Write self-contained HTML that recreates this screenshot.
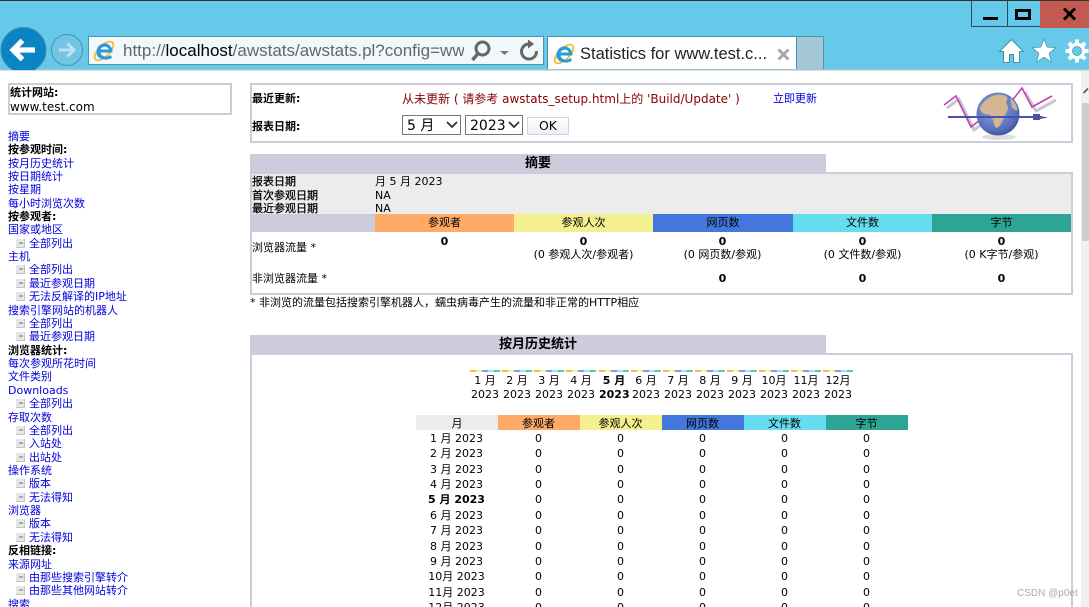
<!DOCTYPE html>
<html lang="zh">
<head>
<meta charset="utf-8">
<title>Statistics for www.test.com</title>
<style>
html,body{margin:0;padding:0;background:#fff;width:1089px;height:607px;overflow:hidden}
body{position:relative;font-family:"DejaVu Sans","WenQuanYi Zen Hei","Noto Sans CJK SC",sans-serif;font-size:11px;color:#000}
div,a,svg,select{position:absolute}
.t{white-space:nowrap;line-height:14px;height:14px;margin-top:1px}
a{color:#0000dd;text-decoration:none}
.b{font-weight:bold}
.ic{width:9px;height:9px;left:16px;background:#e6e6e6;border-right:1px solid #c4c4c4;border-bottom:1px solid #c4c4c4;box-sizing:border-box}
.ic:after{content:"";position:absolute;left:3px;top:3px;width:4px;height:2px;background:#aaa}
.s{left:8px;margin-top:2px}.u{left:29px;margin-top:2px}
.c{text-align:center}
.m{width:82px;padding-right:1px;box-sizing:border-box;text-align:center;white-space:nowrap;line-height:14px;height:14px;margin-top:1px}
.h{text-align:center;line-height:15px;height:15px;top:415px;width:82px;padding:1px 1px 0 0;box-sizing:border-box}
.mini{width:30px;text-align:center;white-space:nowrap;line-height:14px;height:28px;top:374px}
.bar{top:370px;width:30px;height:2px;opacity:.7;background:linear-gradient(90deg,#f90 0 20%,#ee6 20% 40%,#47d 40% 60%,#6de 60% 80%,#2a9 80% 100%)}
.col{width:139px;text-align:center;white-space:nowrap;line-height:14px;height:14px}
.sb{-webkit-text-stroke:.25px #000}
select{appearance:none;-webkit-appearance:none;border:1px solid #767676;background:#fff;border-radius:0;font:14px "DejaVu Sans","WenQuanYi Zen Hei",sans-serif;padding:1px 0 0 4px;margin:0;color:#000;box-sizing:border-box}
</style>
</head>
<body>
<!-- browser chrome -->
<div style="left:0;top:0;width:1089px;height:69px;background:#66c9ea"></div>
<div style="left:0;top:0;width:1089px;height:1px;background:#333"></div>
<div style="left:0;top:69px;width:1089px;height:2px;background:linear-gradient(#8fb7c7,#e4eef2)"></div>

<div style="left:971px;top:1px;width:36px;height:26px;border:1px solid #274e5c;border-top:0;box-sizing:border-box;border-right:0"></div>
<div style="left:1007px;top:1px;width:33px;height:26px;border-left:1px solid #274e5c;border-bottom:1px solid #274e5c;box-sizing:border-box"></div>
<div style="left:1040px;top:1px;width:49px;height:27px;background:#c15b52"></div>
<div style="left:983px;top:17px;width:15px;height:3px;background:#000"></div>
<div style="left:1015px;top:9px;width:16px;height:11px;border:3px solid #000;box-sizing:border-box"></div>
<svg style="left:1062px;top:7px" width="15" height="14" viewBox="0 0 15 14"><path d="M2 1.500L13 12.500M13 1.500L2 12.500" stroke="#000" stroke-width="3"/></svg>

<!-- back / forward -->
<svg style="left:0;top:27px" width="84" height="43" viewBox="0 0 84 43">
<circle cx="23.500" cy="23" r="22.500" fill="#0a84c4" stroke="#3d8fa8"/>
<path d="M13 23H35M22.500 13.500L13 23L22.500 32.500" fill="none" stroke="#fff" stroke-width="5.200"/>
<circle cx="67" cy="23" r="15.500" fill="#72c6e4" stroke="#3e96ae"/>
<path d="M59 23H74M67.500 16.500L74 23L67.500 29.500" fill="none" stroke="#bfe2ee" stroke-width="3"/>
</svg>

<!-- address bar -->
<div style="left:88px;top:36px;width:456px;height:29px;background:#f0f8fb;border:1px solid #4a97ad;box-sizing:border-box"></div>
<svg style="left:92px;top:38px" width="24" height="26" viewBox="0 0 24 26">
<ellipse cx="12" cy="13" rx="12" ry="5.500" transform="rotate(-45 12 13)" fill="none" stroke="#f0c030" stroke-width="1.800"/>
<path d="M4.500 14.500C4.500 9 8 5.500 12.500 5.500C17 5.500 20.500 9 20.500 14.500H8.500C9 18.500 14.500 20 18.800 17L20 19.800C14.500 23.500 4.500 21.500 4.500 14.500ZM8.500 11.500H16.800C16.300 7.800 9.500 7.800 8.500 11.500Z" fill="#2a9ad8"/>
</svg>
<div style="left:123px;top:40px;width:341px;height:22px;overflow:hidden;white-space:nowrap;font:17px/22px 'Liberation Sans',sans-serif;color:#666">http://<span style="color:#000">localhost</span>/awstats/awstats.pl?config=www.test.com</div>
<svg style="left:470px;top:39px" width="70" height="24" viewBox="0 0 70 24">
<circle cx="12.500" cy="9.500" r="6.500" fill="none" stroke="#666" stroke-width="3"/>
<path d="M8 14.500L2.500 21" stroke="#666" stroke-width="3.500"/>
<path d="M30 12H39L34.500 16Z" fill="#777"/>
<path d="M66.500 12A7.500 7.500 0 1 1 59 5" fill="none" stroke="#666" stroke-width="3"/>
<path d="M58 .5L64 5L58 9.500Z" fill="#666"/>
</svg>

<!-- tabs -->
<div style="left:547px;top:36px;width:250px;height:33px;background:#fff;border:1px solid #4a97ad;border-bottom:0;box-sizing:border-box"></div>
<div style="left:797px;top:36px;width:27px;height:33px;background:#a3c7d6;border:1px solid #4a97ad;border-left:0;border-bottom:0;box-sizing:border-box"></div>
<svg style="left:552px;top:41px" width="24" height="26" viewBox="0 0 24 26">
<ellipse cx="12" cy="13" rx="12" ry="5.500" transform="rotate(-45 12 13)" fill="none" stroke="#f0c030" stroke-width="1.800"/>
<path d="M4.500 14.500C4.500 9 8 5.500 12.500 5.500C17 5.500 20.500 9 20.500 14.500H8.500C9 18.500 14.500 20 18.800 17L20 19.800C14.500 23.500 4.500 21.500 4.500 14.500ZM8.500 11.500H16.800C16.300 7.800 9.500 7.800 8.500 11.500Z" fill="#2a9ad8"/>
</svg>
<div style="left:580px;top:43px;height:22px;white-space:nowrap;font:16.500px/22px 'Liberation Sans',sans-serif;color:#222">Statistics for www.test.c...</div>
<svg style="left:777px;top:48px" width="13" height="13" viewBox="0 0 13 13"><path d="M1.500 1.500L11.500 11.500M11.500 1.500L1.500 11.500" stroke="#a8a8a8" stroke-width="3"/></svg>

<!-- toolbar icons -->
<svg style="left:998px;top:38px" width="27" height="26" viewBox="0 0 27 26"><path d="M13.500 1.500L25.500 13.500H21.500V24.500H15.500V16.500H11.500V24.500H5.500V13.500H1.500Z" fill="#fff" stroke="#3f8fa8"/></svg>
<svg style="left:1031px;top:38px" width="26" height="25" viewBox="0 0 26 25"><path d="M13 1L16.200 9.200L25 9.700L18.200 15.300L20.400 24L13 19.200L5.600 24L7.800 15.300L1 9.700L9.800 9.200Z" fill="#fff" stroke="#3f8fa8" stroke-width=".700"/></svg>
<svg style="left:1065px;top:39px" width="24" height="24" viewBox="0 0 24 24">
<circle cx="12" cy="12" r="6.500" fill="none" stroke="#fff" stroke-width="3.500"/>
<path d="M10 .5H14V5H10ZM10 19H14V23.500H10ZM.5 10H5V14H.5ZM19 10H23.500V14H19Z" fill="#fff"/>
<path d="M10 .5H14V5H10ZM10 19H14V23.500H10ZM.5 10H5V14H.5ZM19 10H23.500V14H19Z" fill="#fff" transform="rotate(45 12 12)"/>
<circle cx="12" cy="12" r="4.600" fill="#66c9ea" stroke="#3f8fa8" stroke-width=".6"/>
</svg>

<!-- scrollbar -->
<div style="left:1081px;top:71px;width:8px;height:536px;background:#f0f0f0"></div>
<div style="left:1082px;top:103px;width:7px;height:138px;background:#cdcdcd"></div>
<svg style="left:1083px;top:87px" width="6" height="8" viewBox="0 0 6 8"><path d="M.500 6L5 1.500" stroke="#555" stroke-width="1.600" fill="none"/></svg>

<!-- sidebar -->
<div style="left:8px;top:83px;width:224px;height:32px;border:2px solid #ccccdd;box-sizing:border-box"></div>
<div class="t b" style="left:10px;top:85px">统计网站:</div>
<div class="t" style="left:10px;top:99px;font-size:12px">www.test.com</div>

<a class="t s" style="top:128px">摘要</a>
<div class="t s b" style="top:141px">按参观时间:</div>
<a class="t s" style="top:155px">按月历史统计</a>
<a class="t s" style="top:168px">按日期统计</a>
<a class="t s" style="top:181px">按星期</a>
<a class="t s" style="top:195px">每小时浏览次数</a>
<div class="t s b" style="top:208px">按参观者:</div>
<a class="t s" style="top:221px">国家或地区</a>
<div class="ic" style="top:239px"></div><a class="t u" style="top:235px">全部列出</a>
<a class="t s" style="top:248px">主机</a>
<div class="ic" style="top:265px"></div><a class="t u" style="top:261px">全部列出</a>
<div class="ic" style="top:279px"></div><a class="t u" style="top:275px">最近参观日期</a>
<div class="ic" style="top:292px"></div><a class="t u" style="top:288px">无法反解译的IP地址</a>
<a class="t s" style="top:302px">搜索引擎网站的机器人</a>
<div class="ic" style="top:319px"></div><a class="t u" style="top:315px">全部列出</a>
<div class="ic" style="top:332px"></div><a class="t u" style="top:328px">最近参观日期</a>
<div class="t s b" style="top:342px">浏览器统计:</div>
<a class="t s" style="top:355px">每次参观所花时间</a>
<a class="t s" style="top:368px">文件类别</a>
<a class="t s" style="top:382px">Downloads</a>
<div class="ic" style="top:399px"></div><a class="t u" style="top:395px">全部列出</a>
<a class="t s" style="top:409px">存取次数</a>
<div class="ic" style="top:426px"></div><a class="t u" style="top:422px">全部列出</a>
<div class="ic" style="top:439px"></div><a class="t u" style="top:435px">入站处</a>
<div class="ic" style="top:453px"></div><a class="t u" style="top:449px">出站处</a>
<a class="t s" style="top:462px">操作系统</a>
<div class="ic" style="top:479px"></div><a class="t u" style="top:475px">版本</a>
<div class="ic" style="top:493px"></div><a class="t u" style="top:489px">无法得知</a>
<a class="t s" style="top:502px">浏览器</a>
<div class="ic" style="top:519px"></div><a class="t u" style="top:515px">版本</a>
<div class="ic" style="top:533px"></div><a class="t u" style="top:529px">无法得知</a>
<div class="t s b" style="top:542px">反相链接:</div>
<a class="t s" style="top:556px">来源网址</a>
<div class="ic" style="top:573px"></div><a class="t u" style="top:569px">由那些搜索引擎转介</a>
<div class="ic" style="top:586px"></div><a class="t u" style="top:582px">由那些其他网站转介</a>
<a class="t s" style="top:596px">搜索</a>

<!-- top box -->
<div style="left:250px;top:83px;width:823px;height:60px;border:2px solid #ccccdd;box-sizing:border-box"></div>
<div class="t b" style="left:252px;top:91px">最近更新:</div>
<div class="t" style="left:402px;top:91px;color:#880000;font-size:12px">从未更新 ( 请参考 awstats_setup.html上的 'Build/Update' )</div>
<a class="t" style="left:773px;top:91px">立即更新</a>
<div class="t b" style="left:252px;top:119px">报表日期:</div>
<select style="left:402px;top:115px;width:59px;height:20px"><option>5 月</option></select>
<svg style="left:446px;top:121px" width="12" height="8" viewBox="0 0 12 8"><path d="M1 1L6 6L11 1" fill="none" stroke="#333" stroke-width="1.800"/></svg>
<select style="left:465px;top:115px;width:58px;height:20px"><option>2023</option></select>
<svg style="left:508px;top:121px" width="12" height="8" viewBox="0 0 12 8"><path d="M1 1L6 6L11 1" fill="none" stroke="#333" stroke-width="1.800"/></svg>
<div class="c" style="left:527px;top:117px;width:42px;height:18px;line-height:16px;border:1px solid #ccd6dd;box-sizing:border-box;background:linear-gradient(#fff,#eef0f2);font-size:12.500px">OK</div>

<!-- logo -->
<svg style="left:940px;top:84px" width="118" height="58" viewBox="0 0 118 58">
<defs><radialGradient id="g" cx=".42" cy=".36" r=".75"><stop offset="0" stop-color="#93a8e2"/><stop offset=".7" stop-color="#566fbd"/><stop offset="1" stop-color="#2e4182"/></radialGradient></defs>
<path d="M7 24L19 15L34 46L41 41M85 8L96 27L116 16" fill="none" stroke="#c8c8c8" stroke-width="3"/>
<ellipse cx="59" cy="53" rx="17" ry="3" fill="#ddd"/>
<path d="M4 21L16 12L31 43L40 36M71 18L82 4L92 23L112 12" fill="none" stroke="#c23fb8" stroke-width="1.600"/>
<circle cx="58" cy="30" r="21.500" fill="url(#g)"/>
<path d="M44 18C50 11 60 9 66 12C70 15 64 17 67 21C70 24 66 29 64 33C62 39 59 44 56 44C53 40 54 34 49 30C44 31 40 28 40 24C41 21 42 20 44 18Z" fill="#d4b690"/>
<path d="M70 14C75 17 78 23 77 27L72 24Z" fill="#cdb496"/>
<path d="M8 33H93" stroke="#4a4fa8" stroke-width="2"/>
<path d="M93 30H100V36H93ZM100 32L108 33.500L100 35Z" fill="#4a4fa8"/>
</svg>

<!-- summary -->
<div style="left:250px;top:172px;width:823px;height:123px;border:2px solid #ccccdd;box-sizing:border-box"></div>
<div style="left:250px;top:154px;width:576px;height:20px;background:#ccccdd"></div>
<div class="c b" style="left:250px;top:156px;width:576px;font-size:13px;line-height:15px">摘要</div>
<div style="left:252px;top:174px;width:819px;height:40px;background:#ececec"></div>
<div class="t sb" style="left:252px;top:174px">报表日期</div><div class="t" style="left:375px;top:174px">月 5 月 2023</div>
<div class="t sb" style="left:252px;top:188px">首次参观日期</div><div class="t" style="left:375px;top:188px">NA</div>
<div class="t sb" style="left:252px;top:201px">最近参观日期</div><div class="t" style="left:375px;top:201px">NA</div>

<div style="left:252px;top:214px;width:123px;height:18px;background:#ccccdd"></div>
<div class="col" style="left:375px;top:214px;height:18px;line-height:18px;background:#ffaa66">参观者</div>
<div class="col" style="left:514px;top:214px;height:18px;line-height:18px;background:#f4f090">参观人次</div>
<div class="col" style="left:653px;top:214px;width:140px;height:18px;line-height:18px;background:#4477dd">网页数</div>
<div class="col" style="left:793px;top:214px;height:18px;line-height:18px;background:#66ddee">文件数</div>
<div class="col" style="left:932px;top:214px;height:18px;line-height:18px;background:#2ea495">字节</div>

<div class="t" style="left:252px;top:240px">浏览器流量 *</div>
<div class="t" style="left:252px;top:271px">非浏览器流量 *</div>
<div class="col b" style="left:375px;top:235px">0</div>
<div class="col b" style="left:514px;top:235px">0</div>
<div class="col" style="left:514px;top:248px">(0 参观人次/参观者)</div>
<div class="col b" style="left:653px;top:235px">0</div>
<div class="col" style="left:653px;top:248px">(0 网页数/参观)</div>
<div class="col b" style="left:793px;top:235px">0</div>
<div class="col" style="left:793px;top:248px">(0 文件数/参观)</div>
<div class="col b" style="left:932px;top:235px">0</div>
<div class="col" style="left:932px;top:248px">(0 K字节/参观)</div>
<div class="col b" style="left:653px;top:272px">0</div>
<div class="col b" style="left:793px;top:272px">0</div>
<div class="col b" style="left:932px;top:272px">0</div>
<div class="t" style="left:250px;top:295px">* 非浏览的流量包括搜索引擎机器人，蠕虫病毒产生的流量和非正常的HTTP相应</div>

<!-- monthly -->
<div style="left:250px;top:353px;width:823px;height:260px;border:2px solid #ccccdd;box-sizing:border-box"></div>
<div style="left:250px;top:335px;width:576px;height:20px;background:#ccccdd"></div>
<div class="c b" style="left:250px;top:337px;width:576px;font-size:13px;line-height:15px">按月历史统计</div>

<div class="bar" style="left:470px"></div><div class="bar" style="left:502px"></div><div class="bar" style="left:534px"></div><div class="bar" style="left:566px"></div><div class="bar" style="left:599px"></div><div class="bar" style="left:631px"></div><div class="bar" style="left:663px"></div><div class="bar" style="left:695px"></div><div class="bar" style="left:727px"></div><div class="bar" style="left:759px"></div><div class="bar" style="left:791px"></div><div class="bar" style="left:823px"></div>
<div class="mini" style="left:470px">1 月<br>2023</div>
<div class="mini" style="left:502px">2 月<br>2023</div>
<div class="mini" style="left:534px">3 月<br>2023</div>
<div class="mini" style="left:566px">4 月<br>2023</div>
<div class="mini b" style="left:599px">5 月<br>2023</div>
<div class="mini" style="left:631px">6 月<br>2023</div>
<div class="mini" style="left:663px">7 月<br>2023</div>
<div class="mini" style="left:695px">8 月<br>2023</div>
<div class="mini" style="left:727px">9 月<br>2023</div>
<div class="mini" style="left:759px">10月<br>2023</div>
<div class="mini" style="left:791px">11月<br>2023</div>
<div class="mini" style="left:823px">12月<br>2023</div>

<div class="h" style="left:416px;background:#ececec;padding-right:0">月</div>
<div class="h" style="left:498px;background:#ffaa66">参观者</div>
<div class="h" style="left:580px;background:#f4f090">参观人次</div>
<div class="h" style="left:662px;background:#4477dd">网页数</div>
<div class="h" style="left:744px;background:#66ddee">文件数</div>
<div class="h" style="left:826px;background:#2ea495">字节</div>

<div class="m" style="left:416px;top:431px">1 月 2023</div><div class="m" style="left:498px;top:431px">0</div><div class="m" style="left:580px;top:431px">0</div><div class="m" style="left:662px;top:431px">0</div><div class="m" style="left:744px;top:431px">0</div><div class="m" style="left:826px;top:431px">0</div>
<div class="m" style="left:416px;top:446px">2 月 2023</div><div class="m" style="left:498px;top:446px">0</div><div class="m" style="left:580px;top:446px">0</div><div class="m" style="left:662px;top:446px">0</div><div class="m" style="left:744px;top:446px">0</div><div class="m" style="left:826px;top:446px">0</div>
<div class="m" style="left:416px;top:462px">3 月 2023</div><div class="m" style="left:498px;top:462px">0</div><div class="m" style="left:580px;top:462px">0</div><div class="m" style="left:662px;top:462px">0</div><div class="m" style="left:744px;top:462px">0</div><div class="m" style="left:826px;top:462px">0</div>
<div class="m" style="left:416px;top:477px">4 月 2023</div><div class="m" style="left:498px;top:477px">0</div><div class="m" style="left:580px;top:477px">0</div><div class="m" style="left:662px;top:477px">0</div><div class="m" style="left:744px;top:477px">0</div><div class="m" style="left:826px;top:477px">0</div>
<div class="m b" style="left:416px;top:492px">5 月 2023</div><div class="m" style="left:498px;top:492px">0</div><div class="m" style="left:580px;top:492px">0</div><div class="m" style="left:662px;top:492px">0</div><div class="m" style="left:744px;top:492px">0</div><div class="m" style="left:826px;top:492px">0</div>
<div class="m" style="left:416px;top:508px">6 月 2023</div><div class="m" style="left:498px;top:508px">0</div><div class="m" style="left:580px;top:508px">0</div><div class="m" style="left:662px;top:508px">0</div><div class="m" style="left:744px;top:508px">0</div><div class="m" style="left:826px;top:508px">0</div>
<div class="m" style="left:416px;top:523px">7 月 2023</div><div class="m" style="left:498px;top:523px">0</div><div class="m" style="left:580px;top:523px">0</div><div class="m" style="left:662px;top:523px">0</div><div class="m" style="left:744px;top:523px">0</div><div class="m" style="left:826px;top:523px">0</div>
<div class="m" style="left:416px;top:539px">8 月 2023</div><div class="m" style="left:498px;top:539px">0</div><div class="m" style="left:580px;top:539px">0</div><div class="m" style="left:662px;top:539px">0</div><div class="m" style="left:744px;top:539px">0</div><div class="m" style="left:826px;top:539px">0</div>
<div class="m" style="left:416px;top:554px">9 月 2023</div><div class="m" style="left:498px;top:554px">0</div><div class="m" style="left:580px;top:554px">0</div><div class="m" style="left:662px;top:554px">0</div><div class="m" style="left:744px;top:554px">0</div><div class="m" style="left:826px;top:554px">0</div>
<div class="m" style="left:416px;top:569px">10月 2023</div><div class="m" style="left:498px;top:569px">0</div><div class="m" style="left:580px;top:569px">0</div><div class="m" style="left:662px;top:569px">0</div><div class="m" style="left:744px;top:569px">0</div><div class="m" style="left:826px;top:569px">0</div>
<div class="m" style="left:416px;top:585px">11月 2023</div><div class="m" style="left:498px;top:585px">0</div><div class="m" style="left:580px;top:585px">0</div><div class="m" style="left:662px;top:585px">0</div><div class="m" style="left:744px;top:585px">0</div><div class="m" style="left:826px;top:585px">0</div>
<div class="m" style="left:416px;top:600px">12月 2023</div><div class="m" style="left:498px;top:600px">0</div><div class="m" style="left:580px;top:600px">0</div><div class="m" style="left:662px;top:600px">0</div><div class="m" style="left:744px;top:600px">0</div><div class="m" style="left:826px;top:600px">0</div>

<div class="t" style="left:1017px;top:586px;font:10px/14px 'Liberation Sans',sans-serif;color:#aaa">CSDN @p0et</div>
</body>
</html>
